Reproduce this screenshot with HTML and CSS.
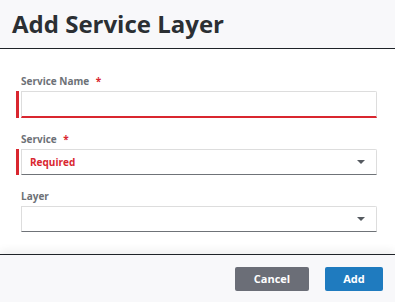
FILE: index.html
```html
<!DOCTYPE html>
<html>
<head>
<meta charset="utf-8">
<link rel="stylesheet" href="styles.css">
</head>
<body>
<div class="dialog">
  <header class="dlg-header">
    <h1 class="dlg-title">Add Service Layer</h1>
  </header>
  <main class="dlg-body">
    <div class="field">
      <label class="field-label">Service Name <span class="req">*</span></label>
      <div class="control-row error">
        <span class="bar"></span>
        <div class="input input-error"></div>
      </div>
    </div>
    <div class="field">
      <label class="field-label">Service <span class="req">*</span></label>
      <div class="control-row error">
        <span class="bar"></span>
        <div class="select">
          <span class="select-text error-text">Required</span>
          <span class="caret"></span>
        </div>
      </div>
    </div>
    <div class="field">
      <label class="field-label">Layer</label>
      <div class="control-row">
        <span class="bar"></span>
        <div class="select">
          <span class="select-text"></span>
          <span class="caret"></span>
        </div>
      </div>
    </div>
  </main>
  <footer class="dlg-footer">
    <button class="btn btn-cancel">Cancel</button>
    <button class="btn btn-add">Add</button>
  </footer>
</div>
</body>
</html>
```
FILE: styles.css
```css
html, body {
  margin: 0;
  padding: 0;
  background: #ffffff;
}
body {
  font-family: "Open Sans", "Noto Sans", sans-serif;
  width: 395px;
  height: 302px;
  overflow: hidden;
}
.dialog {
  display: flex;
  flex-direction: column;
  height: 302px;
}
.dlg-header {
  height: 48px;
  background: #f8f8fa;
  border-bottom: 1px solid #1f2328;
  display: flex;
  align-items: center;
  padding-left: 12px;
  box-sizing: content-box;
}
.dlg-title {
  margin: 0;
  font-size: 24px;
  font-weight: 700;
  color: #2b2f33;
  line-height: 30px;
  margin-top: -1px;
}
.dlg-body {
  flex: 1;
  padding: 25px 18px 0 16px;
  display: flex;
  flex-direction: column;
  gap: 14px;
}
.field {
  display: flex;
  flex-direction: column;
}
.field-label {
  font-size: 10px;
  font-weight: 700;
  color: #6d7176;
  line-height: 14px;
  margin-left: 5px;
  margin-bottom: 3px;
}
.req {
  color: #d9262f;
  margin-left: 4px;
}
.control-row {
  display: flex;
  gap: 2px;
}
.bar {
  width: 3px;
  flex: none;
  background: transparent;
}
.control-row.error .bar {
  background: #d9262f;
}
.input {
  flex: 1;
  height: 24px;
  border: 1px solid #dddddd;
  border-bottom: 2px solid #d9262f;
  border-radius: 0 2px 0 0;
  background: #fff;
}
.select {
  flex: 1;
  height: 24px;
  border: 1px solid #dddddd;
  border-bottom: 1px solid #6f7378;
  border-radius: 0 2px 0 0;
  background: #fff;
  display: flex;
  align-items: center;
  justify-content: space-between;
  padding: 0 11px 0 8px;
}
.select-text {
  font-size: 10px;
  font-weight: 700;
  line-height: 14px;
}
.error-text {
  color: #d9262f;
}
.caret {
  width: 0;
  height: 0;
  border-left: 4px solid transparent;
  border-right: 4px solid transparent;
  border-top: 4px solid #555a60;
}
.dlg-footer {
  height: 47px;
  background: #f8f8fa;
  border-top: 1px solid #1f2328;
  box-shadow: 0 -4px 8px rgba(0, 0, 0, 0.06);
  display: flex;
  justify-content: flex-end;
  align-items: center;
  gap: 16px;
  padding-right: 12px;
}
.btn {
  height: 24px;
  border: none;
  border-radius: 2px;
  color: #fff;
  font-family: "Open Sans", "Noto Sans", sans-serif;
  font-size: 11px;
  font-weight: 700;
  padding: 0;
  cursor: pointer;
}
.btn-cancel {
  width: 74px;
  background: #6b6e77;
}
.btn-add {
  width: 58px;
  background: #1f7bbf;
}
```
